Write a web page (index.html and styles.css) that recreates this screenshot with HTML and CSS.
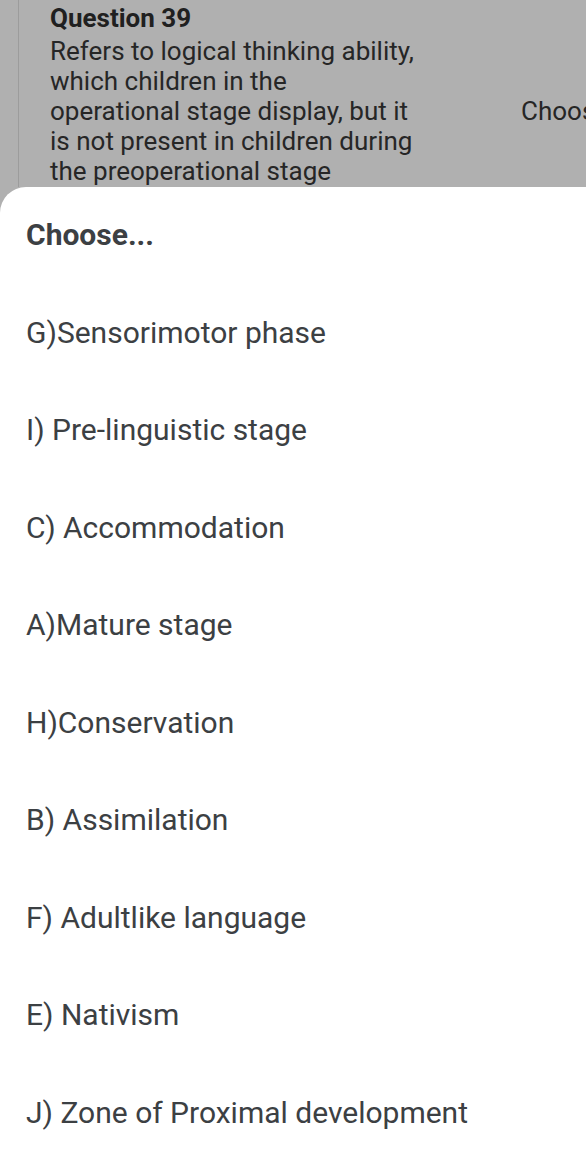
FILE: index.html
```html
<!DOCTYPE html>
<html>
<head>
<meta charset="utf-8">
<link rel="stylesheet" href="styles.css">
</head>
<body>
<div class="page">
  <div class="backdrop">
    <div class="question">
      <div class="q-title">Question 39</div>
      <div class="q-text">Refers to logical thinking ability, which children in the operational stage display, but it is not present in children during the preoperational stage</div>
    </div>
    <div class="select-label">Choose...</div>
  </div>
  <div class="sheet">
    <div class="row head">Choose...</div>
    <div class="row">G)Sensorimotor phase</div>
    <div class="row">I) Pre-linguistic stage</div>
    <div class="row">C) Accommodation</div>
    <div class="row">A)Mature stage</div>
    <div class="row">H)Conservation</div>
    <div class="row">B) Assimilation</div>
    <div class="row">F) Adultlike language</div>
    <div class="row">E) Nativism</div>
    <div class="row">J) Zone of Proximal development</div>
  </div>
</div>
</body>
</html>
```
FILE: styles.css
```css
html, body {
  margin: 0;
  padding: 0;
  background: #ffffff;
  font-family: Roboto, "Liberation Sans", sans-serif;
  overflow: hidden;
}
.page {
  background: #b0b0b0;
  height: 1173px;
  overflow: hidden;
}
.backdrop {
  height: 187px;
  display: flex;
  align-items: flex-start;
  overflow: hidden;
  color: #1f1f1f;
}
.question {
  margin-left: 18px;
  border-left: 1px solid #9c9c9c;
  padding-left: 31px;
  width: 372px;
  flex-shrink: 0;
  height: 187px;
}
.q-title {
  font-weight: bold;
  font-size: 26px;
  line-height: 36px;
  color: #202020;
}
.q-text {
  font-size: 26px;
  line-height: 30px;
  color: #262626;
}
.select-label {
  margin-left: 99px;
  margin-top: 96px;
  font-size: 26px;
  line-height: 30px;
  white-space: nowrap;
  color: #262626;
}
.sheet {
  background: #ffffff;
  border-top-left-radius: 26px;
  height: 986px;
}
.row {
  height: 97.5px;
  display: flex;
  align-items: center;
  padding-left: 26px;
  padding-bottom: 2px;
  box-sizing: border-box;
  font-size: 30px;
  color: #3c4043;
  white-space: nowrap;
}
.row.head {
  font-weight: bold;
  color: #3c4043;
}
```
